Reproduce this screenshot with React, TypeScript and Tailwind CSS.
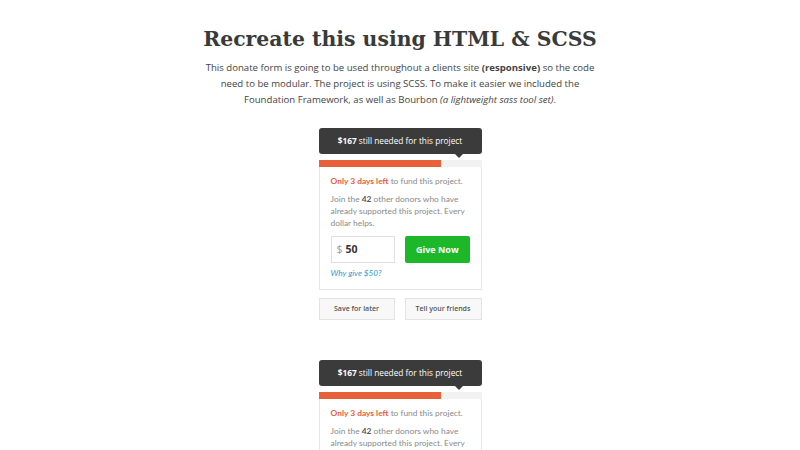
import React from 'react';

const cardFont = { fontFamily: '"Open Sans", "DejaVu Sans", sans-serif' };
const bodyFont = { fontFamily: 'Lato, "Open Sans", sans-serif' };

const DonateWidget: React.FC<{ raised: number }> = ({ raised }) => {
  return (
    <div className="w-[163px]" style={cardFont}>
      <div className="relative h-[26px] rounded-[3px] bg-[#3b3b3b] flex items-center justify-center text-[8.3px] text-white">
        <span>
          <b className="font-bold">$167</b> still needed for this project
        </span>
        <span className="absolute right-[19px] -bottom-[4px] w-0 h-0 border-l-[4px] border-r-[4px] border-t-[4px] border-l-transparent border-r-transparent border-t-[#3b3b3b]" />
      </div>
      <div className="mt-[6px] border border-[#e6e6e6]">
        <div className="h-[7px] bg-[#f2f2f2] -mx-px -mt-px">
          <div className="h-full bg-[#e8603a]" style={{ width: `${raised}%` }} />
        </div>
        <div className="px-[11px] pt-[8px] pb-[10px] text-[8.4px] text-[#8a8a8a]" style={bodyFont}>
          <p className="leading-[12px]">
            <span className="font-bold text-[#e8603a]">Only 3 days left</span> to fund this project.
          </p>
          <p className="mt-[6px] leading-[12px]">
            Join the <b className="font-bold text-[#555]">42</b> other donors who have already supported this project. Every dollar helps.
          </p>
          <div className="mt-[7px] flex gap-[10px]" style={cardFont}>
            <div className="w-[65px] h-[27px] border border-[#e0e0e0] flex items-center px-[5px] text-[10.5px]">
              <span className="text-[#999]">$</span>
              <span className="ml-[3px] font-bold text-[#333]">50</span>
            </div>
            <div className="w-[65px] h-[27px] rounded-[2px] bg-[#1cb82a] text-white font-bold text-[9px] flex items-center justify-center">
              Give Now
            </div>
          </div>
          <p className="mt-[4px] italic text-[#3399cc] text-[8.2px] leading-[12px]">Why give $50?</p>
        </div>
      </div>
      <div className="mt-[8px] flex justify-between">
        <div className="w-[76px] h-[22px] border border-[#e3e3e3] bg-[#f8f8f8] flex items-center justify-center text-[7px] font-semibold text-[#555]">
          Save for later
        </div>
        <div className="w-[77px] h-[22px] border border-[#e3e3e3] bg-[#f8f8f8] flex items-center justify-center text-[7px] font-semibold text-[#555]">
          Tell your friends
        </div>
      </div>
    </div>
  );
};

export default function App() {
  return (
    <div className="w-[800px] h-[450px] overflow-hidden bg-white flex flex-col items-center">
      <h1
        className="mt-[24px] text-[20.4px] font-bold text-[#3a3a3a] leading-[30px]"
        style={{ fontFamily: '"DejaVu Serif", serif' }}
      >
        Recreate this using HTML &amp; SCSS
      </h1>
      <p
        className="mt-[6px] w-[396px] text-center text-[9.6px] leading-[16px] text-[#444]"
        style={{ fontFamily: '"Open Sans", sans-serif' }}
      >
        This donate form is going to be used throughout a clients site <b className="font-bold">(responsive)</b> so the code need to be modular. The project is using SCSS. To make it easier we included the Foundation Framework, as well as Bourbon <i>(a lightweight sass tool set)</i>.
      </p>
      <div className="mt-[20px]">
        <DonateWidget raised={75} />
      </div>
      <div className="mt-[40px]">
        <DonateWidget raised={75} />
      </div>
    </div>
  );
}
